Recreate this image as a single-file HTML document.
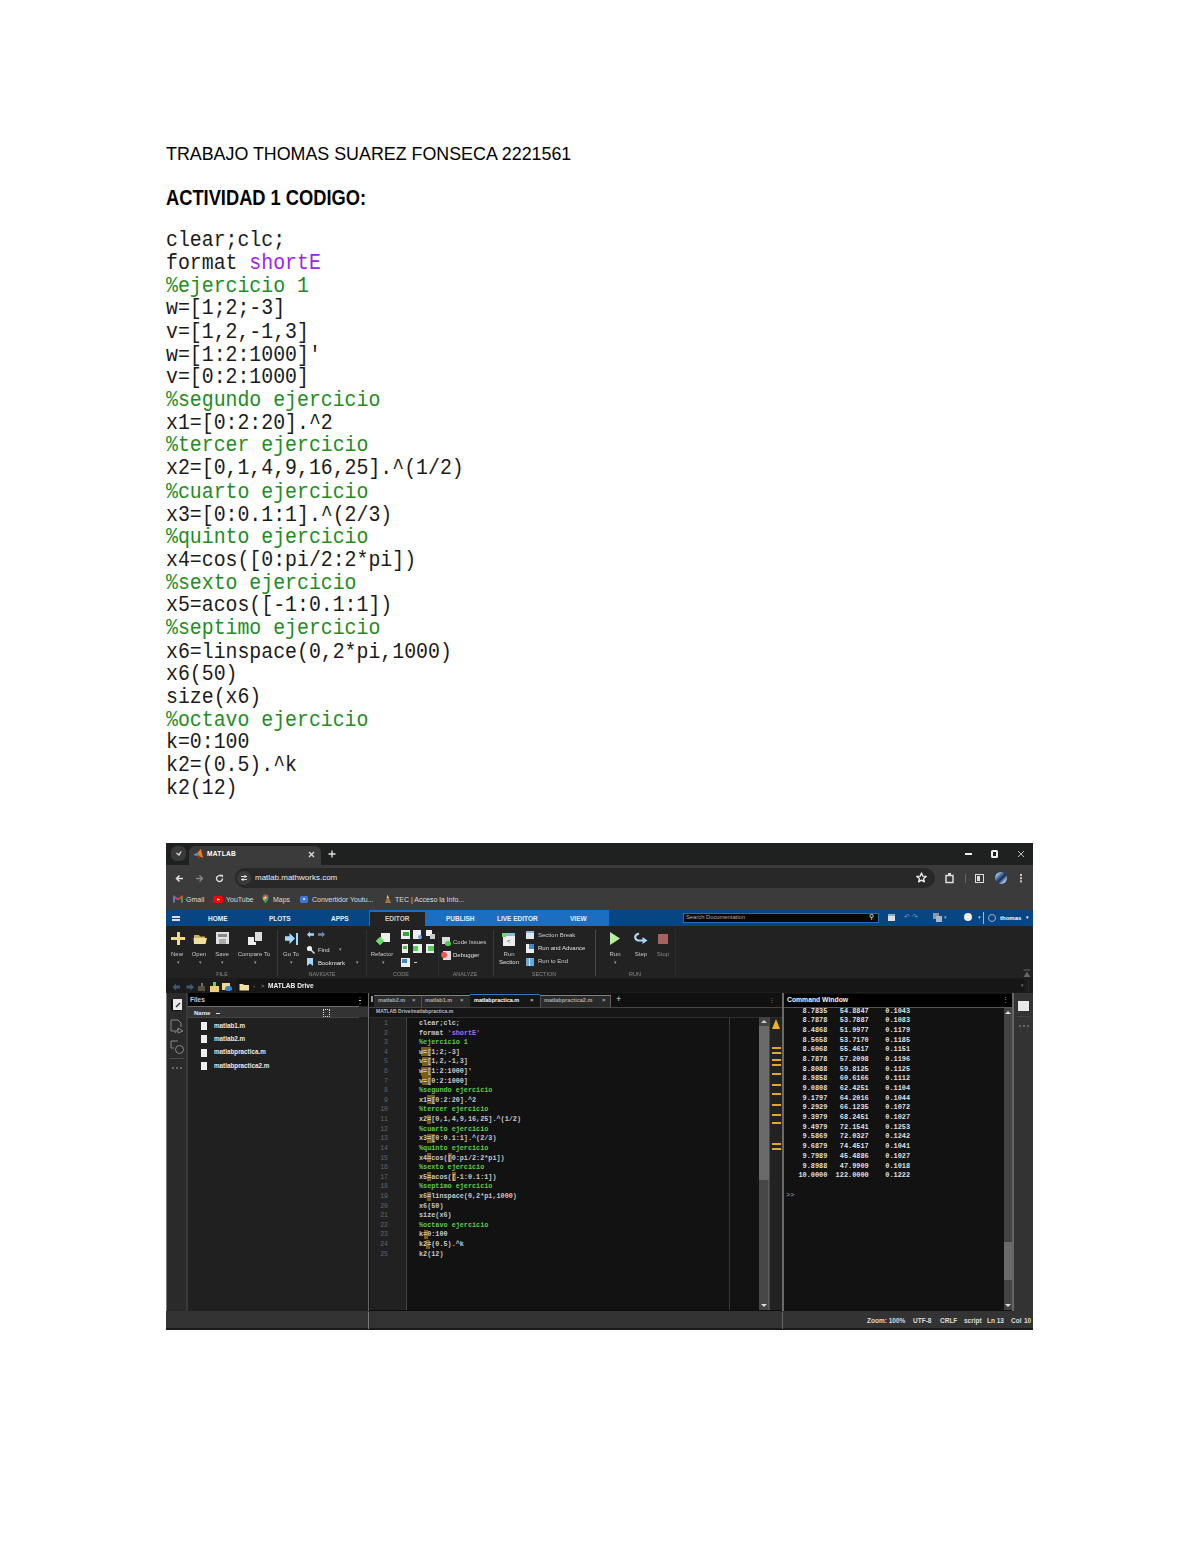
<!DOCTYPE html>
<html><head><meta charset="utf-8">
<style>
html,body{margin:0;padding:0;background:#fff;}
body{width:1200px;height:1553px;position:relative;overflow:hidden;font-family:"Liberation Sans",sans-serif;}
.t{position:absolute;white-space:pre;color:#000;}
#title{left:166px;top:143px;font-size:17.85px;transform:scaleY(1.05);transform-origin:0 0;}
#h1{left:166px;top:184.5px;font-size:18.3px;font-weight:bold;transform:scaleY(1.2);transform-origin:0 0;}
#code{position:absolute;left:166px;top:229.2px;font-family:"Liberation Mono",monospace;font-size:19.85px;line-height:21.14px;transform:scaleY(1.08);transform-origin:0 0;white-space:pre;color:#1a1a1a;}
.g{color:#228b22}.p{color:#a020f0}
.a{position:absolute;}
.s{position:absolute;white-space:pre;font-family:"Liberation Sans",sans-serif;color:#ddd;line-height:1;}
.m{position:absolute;white-space:pre;font-family:"Liberation Mono",monospace;color:#ddd;}
</style></head><body>
<div class="t" id="title">TRABAJO THOMAS SUAREZ FONSECA 2221561</div>
<div class="t" id="h1">ACTIVIDAD 1 CODIGO:</div>
<div id="code">clear;clc;
format <span class="p">shortE</span>
<span class="g">%ejercicio 1</span>
w=[1;2;-3]
v=[1,2,-1,3]
w=[1:2:1000]'
v=[0:2:1000]
<span class="g">%segundo ejercicio</span>
x1=[0:2:20].^2
<span class="g">%tercer ejercicio</span>
x2=[0,1,4,9,16,25].^(1/2)
<span class="g">%cuarto ejercicio</span>
x3=[0:0.1:1].^(2/3)
<span class="g">%quinto ejercicio</span>
x4=cos([0:pi/2:2*pi])
<span class="g">%sexto ejercicio</span>
x5=acos([-1:0.1:1])
<span class="g">%septimo ejercicio</span>
x6=linspace(0,2*pi,1000)
x6(50)
size(x6)
<span class="g">%octavo ejercicio</span>
k=0:100
k2=(0.5).^k
k2(12)</div>

<!-- ===== SCREENSHOT ===== -->
<div id="shotwrap" style="position:absolute;left:0;top:0;width:1200px;height:1553px;filter:blur(0.35px);">
<div class="a" style="left:166px;top:843px;width:867px;height:487px;background:#1f1f1f;overflow:hidden;"></div>
<!-- chrome tab strip -->
<div class="a" style="left:166px;top:843px;width:867px;height:22px;background:#1f2020;"></div>
<div class="a" style="left:171px;top:846px;width:15px;height:15px;border-radius:6px;background:#3a3a3a;"></div>
<svg class="a" style="left:171px;top:846px;" width="15" height="15"><path d="M5.5 7 L8 9 L10 5.5" stroke="#ddd" stroke-width="1.4" fill="none"/></svg>
<div class="a" style="left:189px;top:846px;width:132px;height:19px;background:#3b3b3b;border-radius:6px 6px 0 0;"></div>
<svg class="a" style="left:193px;top:849px;" width="11" height="10"><path d="M0 6 L4 4 L5 7 Z" fill="#4aa8d0"/><path d="M4 4 L8 0 L10 9 L6 7 Z" fill="#f07a20"/><path d="M5 7 L6 7 L7 9 L4.5 9 Z" fill="#b03010"/></svg>
<div class="s" style="left:207px;top:851px;font-size:6.6px;color:#fff;font-weight:bold;letter-spacing:0.3px;">MATLAB</div>
<svg class="a" style="left:308px;top:851px;" width="7" height="7"><path d="M1 1 L6 6 M6 1 L1 6" stroke="#ddd" stroke-width="1.3"/></svg>
<svg class="a" style="left:328px;top:850px;" width="8" height="8"><path d="M4 0.5 V7.5 M0.5 4 H7.5" stroke="#ddd" stroke-width="1.4"/></svg>
<div class="a" style="left:965px;top:852.5px;width:7px;height:2px;background:#eee;"></div>
<div class="a" style="left:991px;top:849.5px;width:7px;height:8px;border:2px solid #eee;border-radius:1.5px;box-sizing:border-box;"></div>
<svg class="a" style="left:1017px;top:850px;" width="8" height="8"><path d="M1 1 L7 7 M7 1 L1 7" stroke="#bbb" stroke-width="1"/></svg>
<!-- toolbar -->
<div class="a" style="left:166px;top:865px;width:867px;height:45px;background:#3b3b3b;"></div>
<svg class="a" style="left:175px;top:874px;" width="9" height="9"><path d="M8 4.5 H1.5 M4.5 1.5 L1.5 4.5 L4.5 7.5" stroke="#e0e0e0" stroke-width="1.5" fill="none"/></svg>
<svg class="a" style="left:195px;top:874px;" width="9" height="9"><path d="M1 4.5 H7.5 M4.5 1.5 L7.5 4.5 L4.5 7.5" stroke="#888" stroke-width="1.3" fill="none"/></svg>
<svg class="a" style="left:215px;top:874px;" width="9" height="9"><path d="M7.5 4.5 A3 3 0 1 1 6.5 2.3" stroke="#ddd" stroke-width="1.4" fill="none"/><path d="M5 0.8 L8 0.8 L8 3.8 Z" fill="#ddd"/></svg>
<div class="a" style="left:235px;top:868px;width:700px;height:20px;border-radius:10px;background:#282828;"></div>
<div class="a" style="left:237px;top:871px;width:14px;height:14px;border-radius:7px;background:#3b3b3b;"></div>
<svg class="a" style="left:240px;top:874px;" width="8" height="8"><path d="M1 2.5 H7 M1 5.5 H7" stroke="#ddd" stroke-width="1.2"/><circle cx="5" cy="2.5" r="1.2" fill="#ddd"/><circle cx="3" cy="5.5" r="1.2" fill="#ddd"/></svg>
<div class="s" style="left:255px;top:874px;font-size:8px;color:#eee;">matlab.mathworks.com</div>
<svg class="a" style="left:916px;top:872px;" width="11" height="11"><path d="M5.5 1 L6.8 4.2 L10.2 4.4 L7.6 6.6 L8.4 9.9 L5.5 8.1 L2.6 9.9 L3.4 6.6 L0.8 4.4 L4.2 4.2 Z" stroke="#eee" stroke-width="1.3" fill="none" stroke-linejoin="round"/></svg>
<svg class="a" style="left:944px;top:872px;" width="11" height="12"><path d="M2 3.5 H9 V10.5 H2 Z" stroke="#ddd" stroke-width="1.5" fill="none"/><path d="M4 1 H7 V3.5 H4 Z" fill="#ddd"/></svg>
<div class="a" style="left:965px;top:874px;width:1px;height:9px;background:#666;"></div>
<div class="a" style="left:975px;top:874px;width:9px;height:9px;border:1.8px solid #ddd;box-sizing:border-box;"></div><div class="a" style="left:977px;top:876px;width:2.5px;height:5px;background:#ddd;"></div>
<div class="a" style="left:995px;top:872px;width:12px;height:12px;border-radius:6px;background:linear-gradient(135deg,#dfe8f8 10%,#4a78b8 35%,#1a2a48 55%,#8ab0e0 75%,#e8eef8);"></div>
<div class="a" style="left:1020px;top:874px;width:1.8px;height:1.8px;background:#ccc;box-shadow:0 3.2px 0 #ccc,0 6.4px 0 #ccc;"></div>
<!-- bookmarks -->
<svg class="a" style="left:173px;top:895px;" width="10" height="8"><path d="M1 7.5 V1.5 L5 4.5 L9 1.5 V7.5" stroke="#ea4335" stroke-width="1.6" fill="none"/><path d="M1 7.5 V1.5" stroke="#4285f4" stroke-width="1.8"/><path d="M9 7.5 V1.5" stroke="#34a853" stroke-width="1.8"/></svg>
<div class="s" style="left:186px;top:896px;font-size:7px;color:#ddd;">Gmail</div>
<div class="a" style="left:213px;top:896px;width:10px;height:7px;border-radius:2px;background:#f00;"></div>
<svg class="a" style="left:213px;top:896px;" width="10" height="7"><path d="M4 2 L7 3.5 L4 5 Z" fill="#fff"/></svg>
<div class="s" style="left:226px;top:896px;font-size:7px;color:#ddd;">YouTube</div>
<svg class="a" style="left:262px;top:894px;" width="7" height="10"><path d="M3.5 9.5 C1 6 0.5 5 0.5 3.5 A3 3 0 0 1 6.5 3.5 C6.5 5 6 6 3.5 9.5 Z" fill="#34a853"/><path d="M0.8 2.5 A3 3 0 0 1 6.2 2.5 L3.5 4 Z" fill="#ea4335"/><path d="M0.6 3.5 L3.5 4 L2 7 Z" fill="#fbbc04"/><path d="M6.4 3.5 L3.5 4 L5 7 Z" fill="#4285f4"/><circle cx="3.5" cy="3.6" r="1" fill="#fff"/></svg>
<div class="s" style="left:273px;top:896px;font-size:7px;color:#ddd;">Maps</div>
<div class="a" style="left:300px;top:896px;width:8px;height:7px;border-radius:1.5px;background:#3a78e0;"></div>
<div class="a" style="left:303px;top:898px;width:2px;height:2px;background:#dde;"></div>
<div class="s" style="left:312px;top:896px;font-size:7px;color:#ddd;">Convertidor Youtu...</div>
<svg class="a" style="left:383px;top:894px;" width="9" height="10"><path d="M2 9 L4 4 L6 4 L8 9 Z" fill="#a07840"/><path d="M4.5 0.5 L6 4 L3.5 4 Z" fill="#e8c070"/></svg>
<div class="s" style="left:395px;top:896px;font-size:7px;color:#ddd;">TEC | Acceso la Info...</div>
<!-- matlab ribbon tabs -->
<div class="a" style="left:166px;top:910px;width:867px;height:16px;background:#084683;"></div>
<div class="a" style="left:426px;top:910px;width:183px;height:16px;background:#1b6fc2;"></div>
<div class="a" style="left:369px;top:910px;width:57px;height:17px;background:#1c6ec0;"></div>
<div class="a" style="left:370px;top:912px;width:55px;height:15px;background:#232323;"></div>
<div class="a" style="left:172px;top:916px;width:8px;height:1.5px;background:#ddd;box-shadow:0 3px 0 #ddd;"></div>
<div class="s" style="left:208px;top:915.5px;font-size:6.5px;font-weight:bold;color:#e8f0ff;">HOME</div>
<div class="s" style="left:269px;top:915.5px;font-size:6.5px;font-weight:bold;color:#e8f0ff;">PLOTS</div>
<div class="s" style="left:331px;top:915.5px;font-size:6.5px;font-weight:bold;color:#e8f0ff;">APPS</div>
<div class="s" style="left:385px;top:915.5px;font-size:6.5px;font-weight:bold;color:#ccc;">EDITOR</div>
<div class="s" style="left:446px;top:915.5px;font-size:6.5px;font-weight:bold;color:#e8f0ff;">PUBLISH</div>
<div class="s" style="left:497px;top:915.5px;font-size:6.5px;font-weight:bold;color:#e8f0ff;">LIVE EDITOR</div>
<div class="s" style="left:570px;top:915.5px;font-size:6.5px;font-weight:bold;color:#e8f0ff;">VIEW</div>
<div class="a" style="left:683px;top:913px;width:196px;height:10px;background:#080808;border:1px solid #1b6fc2;box-sizing:border-box;"></div>
<div class="s" style="left:686px;top:915px;font-size:5.8px;color:#aaa;">Search Documentation</div>
<div class="s" style="left:869px;top:913px;font-size:7px;color:#eee;">&#9906;</div>
<div class="a" style="left:888px;top:914px;width:7px;height:7px;background:#ddd;border-top:2px solid #9ab;box-sizing:border-box;"></div>
<div class="s" style="left:904px;top:913px;font-size:7px;color:#7a9ab8;">&#8630; &#8631;</div>
<div class="a" style="left:933px;top:913px;width:6px;height:6px;background:#8898a8;"></div>
<div class="a" style="left:936px;top:916px;width:6px;height:6px;background:#a8b8c8;"></div>
<div class="s" style="left:944px;top:915px;font-size:5px;color:#aab;">&#9662;</div>
<div class="a" style="left:964px;top:913px;width:8px;height:8px;border-radius:4px;background:#eee;"></div>
<div class="s" style="left:978px;top:915px;font-size:5px;color:#ccd;">&#9662;</div>
<div class="a" style="left:983px;top:912px;width:1px;height:12px;background:#9bd;"></div>
<div class="a" style="left:988px;top:914px;width:6px;height:6px;border:1px solid #aab;border-radius:4px;"></div>
<div class="s" style="left:1000px;top:915px;font-size:6px;color:#fff;font-weight:bold;">thomas</div>
<div class="s" style="left:1026px;top:915px;font-size:5px;color:#fff;">&#9662;</div>
<!-- toolstrip -->
<div class="a" style="left:166px;top:926px;width:867px;height:52px;background:#222;"></div>
<div class="a" style="left:277px;top:930px;width:1px;height:46px;background:#3a3a3a;"></div>
<div class="a" style="left:365.5px;top:930px;width:1px;height:46px;background:#333;"></div>
<div class="a" style="left:438px;top:930px;width:1px;height:46px;background:#2c2c2c;"></div>
<div class="a" style="left:493px;top:930px;width:1px;height:46px;background:#3a3a3a;"></div>
<div class="a" style="left:595px;top:930px;width:1px;height:46px;background:#4a4a4a;"></div>
<div class="a" style="left:675px;top:930px;width:1px;height:46px;background:#2a2a2a;"></div>
<svg class="a" style="left:1023px;top:969px;" width="8" height="9"><path d="M0.5 1 H7.5" stroke="#666" stroke-width="1"/><path d="M4 2.5 L7.5 8 H0.5 Z" fill="#666"/></svg>
<!-- FILE -->
<div class="a" style="left:171px;top:937px;width:14px;height:3px;background:#f5dc78;"></div>
<div class="a" style="left:176.5px;top:932px;width:3px;height:13px;background:#f5dc78;"></div>
<svg class="a" style="left:193px;top:933px;" width="15" height="12"><path d="M1 2 H6 L7 3.5 H12 V5 H1 Z" fill="#c8b060"/><path d="M0.5 5 H14 L12.5 11 H1 Z" fill="#f0e0a0"/></svg>
<div class="a" style="left:216px;top:932px;width:13px;height:12px;background:#e0e0e0;"></div>
<div class="a" style="left:218px;top:934px;width:9px;height:3px;background:#888;"></div>
<div class="a" style="left:219px;top:939px;width:7px;height:5px;background:#aaa;"></div>
<div class="a" style="left:248px;top:937px;width:8px;height:8px;background:#eee;"></div>
<div class="a" style="left:254px;top:932px;width:7px;height:9px;background:#ddd;border-left:1px solid #222;border-bottom:1px solid #222;"></div>
<div class="s" style="left:147px;top:951px;width:60px;text-align:center;font-size:6px;color:#c8c8c8;">New</div>
<div class="s" style="left:169px;top:951px;width:60px;text-align:center;font-size:6px;color:#c8c8c8;">Open</div>
<div class="s" style="left:192px;top:951px;width:60px;text-align:center;font-size:6px;color:#c8c8c8;">Save</div>
<div class="s" style="left:224px;top:951px;width:60px;text-align:center;font-size:6px;color:#c8c8c8;">Compare To</div>
<div class="s" style="left:148px;top:960px;width:60px;text-align:center;font-size:5px;color:#999;">&#9662;</div>
<div class="s" style="left:170px;top:960px;width:60px;text-align:center;font-size:5px;color:#999;">&#9662;</div>
<div class="s" style="left:192px;top:960px;width:60px;text-align:center;font-size:5px;color:#999;">&#9662;</div>
<div class="s" style="left:225px;top:960px;width:60px;text-align:center;font-size:5px;color:#999;">&#9662;</div>
<div class="s" style="left:192px;top:972px;width:60px;text-align:center;font-size:5.5px;color:#888;">FILE</div>
<!-- NAVIGATE -->
<div class="a" style="left:285px;top:933px;width:10px;height:11px;background:#a8d8f8;clip-path:polygon(0 30%,45% 30%,45% 0,100% 50%,45% 100%,45% 70%,0 70%);"></div>
<div class="a" style="left:296px;top:933px;width:2px;height:12px;background:#a8d8f8;"></div>
<div class="s" style="left:261px;top:951px;width:60px;text-align:center;font-size:6px;color:#c8c8c8;">Go To</div>
<div class="s" style="left:261px;top:960px;width:60px;text-align:center;font-size:5px;color:#999;">&#9662;</div>
<svg class="a" style="left:306px;top:931px;" width="20" height="7"><path d="M1 3.5 L4 0.5 V2.3 H8 V4.7 H4 V6.5 Z" fill="#a8d8f8"/><path d="M19 3.5 L16 0.5 V2.3 H12 V4.7 H16 V6.5 Z" fill="#6a8aa8"/></svg>
<svg class="a" style="left:306px;top:945px;" width="9" height="9"><circle cx="3.5" cy="3.5" r="2.6" fill="#eee"/><path d="M5 5 L8.5 8.5" stroke="#ddd" stroke-width="1.5"/></svg>
<div class="s" style="left:318px;top:947px;font-size:6px;color:#ddd;">Find</div>
<div class="s" style="left:339px;top:947px;font-size:5px;color:#999;">&#9662;</div>
<div class="a" style="left:307px;top:958px;width:6px;height:8px;background:#a8d8f8;clip-path:polygon(0 0,100% 0,100% 100%,50% 70%,0 100%);"></div>
<div class="s" style="left:318px;top:960px;font-size:6px;color:#e8e8e8;">Bookmark</div>
<div class="s" style="left:356px;top:960px;font-size:5px;color:#999;">&#9662;</div>
<div class="s" style="left:292px;top:972px;width:60px;text-align:center;font-size:5.5px;color:#888;">NAVIGATE</div>
<!-- CODE -->
<div class="a" style="left:381px;top:933px;width:9px;height:9px;background:#eee;"></div>
<div class="a" style="left:377px;top:938px;width:6px;height:6px;background:#6d6;transform:rotate(45deg);"></div>
<div class="s" style="left:352px;top:951px;width:60px;text-align:center;font-size:6px;color:#c8c8c8;">Refactor</div>
<div class="s" style="left:353px;top:960px;width:60px;text-align:center;font-size:5px;color:#999;">&#9662;</div>
<div class="a" style="left:401px;top:930px;width:9px;height:9px;background:#eee;"></div><div class="a" style="left:403px;top:932px;width:6px;height:4px;background:#3a3;"></div>
<div class="a" style="left:413px;top:930px;width:8px;height:9px;background:#eee;"></div><div class="a" style="left:418px;top:935px;width:4px;height:4px;border-radius:2px;background:#6ae;"></div>
<div class="a" style="left:426px;top:930px;width:6px;height:6px;background:#eee;"></div><div class="a" style="left:430px;top:934px;width:5px;height:5px;background:#ccc;"></div>
<div class="a" style="left:402px;top:944px;width:6px;height:9px;background:#eee;"></div><div class="a" style="left:403px;top:946px;width:4px;height:3px;background:#4b4;"></div>
<div class="a" style="left:413px;top:944px;width:9px;height:9px;background:#eee;"></div><div class="a" style="left:413px;top:946px;width:5px;height:5px;background:#5c5;"></div>
<div class="a" style="left:426px;top:944px;width:8px;height:9px;background:#eee;"></div><div class="a" style="left:428px;top:946px;width:6px;height:5px;background:#5c5;"></div>
<div class="a" style="left:401px;top:958px;width:9px;height:9px;background:#eee;"></div><div class="a" style="left:402px;top:959px;width:5px;height:4px;background:#48c;"></div>
<div class="a" style="left:414px;top:962px;width:3px;height:1px;background:#ccc;"></div>
<div class="s" style="left:371px;top:972px;width:60px;text-align:center;font-size:5.5px;color:#888;">CODE</div>
<!-- ANALYZE -->
<div class="a" style="left:442px;top:937px;width:8px;height:7px;background:#ddd;"></div>
<div class="a" style="left:445px;top:941px;width:6px;height:5px;background:#5c5;border-radius:3px;"></div>
<div class="s" style="left:453px;top:939px;font-size:6px;color:#ccc;">Code Issues</div>
<div class="a" style="left:443px;top:951px;width:8px;height:9px;background:#ddd;"></div>
<div class="a" style="left:441px;top:952px;width:6px;height:6px;background:#e55;border-radius:3px;"></div>
<div class="s" style="left:453px;top:952px;font-size:6px;color:#e0e0e0;">Debugger</div>
<div class="s" style="left:435px;top:972px;width:60px;text-align:center;font-size:5.5px;color:#888;">ANALYZE</div>
<!-- SECTION -->
<div class="a" style="left:503px;top:933px;width:12px;height:13px;background:#eee;border-top:3px solid #8bd;box-sizing:border-box;"></div>
<div class="a" style="left:502px;top:933px;width:4px;height:4px;background:#6d6;"></div>
<div class="s" style="left:507px;top:938px;font-size:6px;color:#333;">&lt;</div>
<div class="s" style="left:479px;top:951px;width:60px;text-align:center;font-size:6px;color:#c8c8c8;">Run</div>
<div class="s" style="left:479px;top:959px;width:60px;text-align:center;font-size:6px;color:#e0e0e0;">Section</div>
<div class="a" style="left:526px;top:931px;width:8px;height:8px;background:#dde8f0;border-top:2px solid #8bd;box-sizing:border-box;"></div>
<div class="s" style="left:538px;top:932px;font-size:6px;color:#ccc;">Section Break</div>
<div class="a" style="left:526px;top:944px;width:8px;height:9px;background:#eee;"></div><div class="a" style="left:529px;top:944px;width:5px;height:5px;background:#48c;"></div>
<div class="s" style="left:538px;top:945px;font-size:6px;color:#e0e0e0;">Run and Advance</div>
<div class="a" style="left:526px;top:958px;width:8px;height:8px;background:#6ad;"></div><div class="a" style="left:529px;top:958px;width:1px;height:8px;background:#eee;"></div>
<div class="s" style="left:538px;top:958px;font-size:6px;color:#ccc;">Run to End</div>
<div class="s" style="left:514px;top:972px;width:60px;text-align:center;font-size:5.5px;color:#888;">SECTION</div>
<!-- RUN -->
<div class="a" style="left:610px;top:932px;width:10px;height:13px;background:#b8f0a0;clip-path:polygon(0 0,100% 50%,0 100%);"></div>
<svg class="a" style="left:634px;top:932px;" width="15" height="14"><path d="M5 2 A3.2 3.2 0 0 0 4 8.5 H9" stroke="#a8d8f8" stroke-width="2.2" fill="none"/><path d="M8.5 5 L13.5 8.5 L8.5 12 Z" fill="#a8d8f8"/></svg>
<div class="a" style="left:658px;top:934px;width:10px;height:10px;background:#a86060;"></div>
<div class="s" style="left:585px;top:951px;width:60px;text-align:center;font-size:6px;color:#c8c8c8;">Run</div>
<div class="s" style="left:611px;top:951px;width:60px;text-align:center;font-size:6px;color:#c8c8c8;">Step</div>
<div class="s" style="left:633px;top:951px;width:60px;text-align:center;font-size:6px;color:#888;">Stop</div>
<div class="s" style="left:585px;top:960px;width:60px;text-align:center;font-size:5px;color:#999;">&#9662;</div>
<div class="s" style="left:605px;top:972px;width:60px;text-align:center;font-size:5.5px;color:#888;">RUN</div>
<!-- breadcrumb -->
<div class="a" style="left:166px;top:978px;width:867px;height:15px;background:#1c1c1c;"></div>
<div class="a" style="left:237px;top:979px;width:787px;height:13px;background:#161616;"></div>
<svg class="a" style="left:172px;top:983px;" width="24" height="8"><path d="M0.5 4 L4 0.5 V2.5 H8 V5.5 H4 V7.5 Z" fill="#3d5878"/><path d="M22 4 L18.5 0.5 V2.5 H14.5 V5.5 H18.5 V7.5 Z" fill="#3d5878"/></svg>
<div class="a" style="left:198px;top:986px;width:7px;height:5px;background:#5a5040;"></div>
<div class="a" style="left:201px;top:983px;width:2px;height:3px;background:#777;"></div>
<div class="a" style="left:210px;top:986px;width:9px;height:6px;background:#e8d070;"></div>
<div class="a" style="left:213px;top:982px;width:3px;height:4px;background:#6c6;"></div>
<div class="a" style="left:222px;top:983px;width:8px;height:7px;background:#f0d890;"></div>
<div class="a" style="left:225px;top:986px;width:7px;height:5px;border-radius:3px;background:#3a8ad0;"></div>
<svg class="a" style="left:239px;top:983px;" width="11" height="8"><path d="M0.5 1 H4 L5 2 H10 V7.5 H0.5 Z" fill="#f0e0a0"/></svg>
<div class="s" style="left:253px;top:983px;font-size:6px;color:#888;">&#8250;</div>
<div class="s" style="left:261px;top:983px;font-size:6px;color:#aaa;">&gt;</div>
<div class="s" style="left:268px;top:983px;font-size:6.6px;color:#f0f0f0;font-weight:bold;">MATLAB Drive</div>
<div class="s" style="left:1021px;top:983px;font-size:5px;color:#777;">&#9662;</div>
<div class="a" style="left:1028px;top:979px;width:1px;height:13px;background:#2a2a2a;"></div>
<!-- left icon sidebar -->
<div class="a" style="left:166px;top:993px;width:20px;height:319px;background:#2a2a2a;"></div>
<div class="a" style="left:166px;top:993px;width:1px;height:337px;background:#777;"></div>
<div class="a" style="left:186px;top:993px;width:2px;height:319px;background:#3a3a3a;"></div>
<div class="a" style="left:171px;top:999px;width:10px;height:12px;background:#111;border-radius:2px;"></div>
<div class="a" style="left:173px;top:999px;width:9px;height:11px;background:#eaeaea;"></div>
<svg class="a" style="left:175px;top:1002px;" width="6" height="6"><path d="M1 5 L5 1" stroke="#333" stroke-width="1.5"/></svg>
<svg class="a" style="left:170px;top:1019px;" width="15" height="15"><path d="M1 1 H8 L11 4 V8 M1 1 V12 H6" stroke="#888" stroke-width="1" fill="none"/><path d="M8 9 L13 12 L8 14 Z M5 14 L8 10" stroke="#888" stroke-width="1" fill="none"/></svg>
<svg class="a" style="left:170px;top:1040px;" width="15" height="15"><path d="M1 1 H8 M1 1 V8 H4" stroke="#888" stroke-width="1" fill="none"/><circle cx="9.5" cy="9.5" r="4" stroke="#888" stroke-width="1" fill="none"/></svg>
<div class="a" style="left:169px;top:1058px;width:15px;height:1px;background:#4a4a4a;"></div>
<div class="a" style="left:172px;top:1067px;width:2px;height:2px;background:#666;box-shadow:4px 0 0 #666,8px 0 0 #666;"></div>
<!-- files panel -->
<div class="a" style="left:188px;top:993px;width:180px;height:319px;background:#202020;"></div>
<div class="a" style="left:188px;top:993px;width:180px;height:13px;background:#000;"></div>
<div class="s" style="left:190px;top:997px;font-size:6.5px;color:#ccd;font-weight:bold;">Files</div>
<div class="a" style="left:359px;top:996.5px;width:1.5px;height:1.5px;background:#444;box-shadow:0 3px 0 #ddd,0 6px 0 #444;"></div>
<div class="a" style="left:188px;top:1006px;width:171px;height:1px;background:#6a6a6a;"></div>
<div class="a" style="left:188px;top:1007px;width:180px;height:10px;background:#333;"></div>
<div class="a" style="left:188px;top:1017px;width:171px;height:1px;background:#444;"></div>
<div class="s" style="left:194px;top:1010px;font-size:6px;color:#e8e8ff;font-weight:bold;">Name</div>
<div class="a" style="left:216px;top:1013px;width:4px;height:1.2px;background:#ddd;"></div>
<div class="a" style="left:323px;top:1009px;width:5px;height:6px;border:1px dotted #ddd;"></div>
<div class="a" style="left:201px;top:1022.0px;width:6px;height:8px;background:#eee;"></div>
<div class="s" style="left:214px;top:1022.5px;font-size:6.3px;color:#e8e8e8;font-weight:bold;">matlab1.m</div>
<div class="a" style="left:201px;top:1035.0px;width:6px;height:8px;background:#eee;"></div>
<div class="s" style="left:214px;top:1035.5px;font-size:6.3px;color:#e8e8e8;font-weight:bold;">matlab2.m</div>
<div class="a" style="left:201px;top:1048.5px;width:6px;height:8px;background:#eee;"></div>
<div class="s" style="left:214px;top:1049.0px;font-size:6.3px;color:#e8e8e8;font-weight:bold;">matlabpractica.m</div>
<div class="a" style="left:201px;top:1062.0px;width:6px;height:8px;background:#eee;"></div>
<div class="s" style="left:214px;top:1062.5px;font-size:6.3px;color:#e8e8e8;font-weight:bold;">matlabpractica2.m</div>
<div class="a" style="left:368px;top:993px;width:1.5px;height:337px;background:#6a6a6a;"></div>
<!-- editor -->
<div class="a" style="left:369px;top:993px;width:414px;height:319px;background:#121212;"></div>
<div class="a" style="left:369px;top:993px;width:414px;height:14px;background:#111;"></div>
<div class="a" style="left:371px;top:996px;width:2px;height:6px;background:#999;"></div>
<div class="a" style="left:374px;top:995px;width:47px;height:12px;background:#2a2a2a;border-top:1px solid #808080;box-sizing:border-box;"></div>
<div class="a" style="left:421px;top:995px;width:49px;height:12px;background:#2a2a2a;border-top:1px solid #808080;border-left:1px solid #505050;box-sizing:border-box;"></div>
<div class="a" style="left:470px;top:994px;width:70px;height:13px;background:#161616;border-top:1.5px solid #2a7ad0;box-sizing:border-box;"></div>
<div class="a" style="left:540px;top:995px;width:71px;height:12px;background:#2a2a2a;border-top:1px solid #808080;border-left:1px solid #505050;border-right:1px solid #606060;box-sizing:border-box;"></div>
<div class="s" style="left:378px;top:998px;font-size:5.5px;color:#aaa;font-weight:bold;">matlab2.m</div>
<div class="s" style="left:412px;top:997px;font-size:6px;color:#ccc;">&#215;</div>
<div class="s" style="left:425px;top:998px;font-size:5.5px;color:#aaa;font-weight:bold;">matlab1.m</div>
<div class="s" style="left:460px;top:997px;font-size:6px;color:#ccc;">&#215;</div>
<div class="s" style="left:474px;top:998px;font-size:5.5px;color:#fff;font-weight:bold;">matlabpractica.m</div>
<div class="s" style="left:530px;top:997px;font-size:6px;color:#eee;">&#215;</div>
<div class="s" style="left:544px;top:998px;font-size:5.5px;color:#aaa;font-weight:bold;">matlabpractica2.m</div>
<div class="s" style="left:602px;top:997px;font-size:6px;color:#ccc;">&#215;</div>
<div class="s" style="left:616px;top:995px;font-size:9px;color:#ddd;">+</div>
<div class="s" style="left:769px;top:997px;font-size:6px;color:#888;">&#8942;</div>
<div class="a" style="left:369px;top:1007px;width:414px;height:1px;background:#444;"></div>
<div class="a" style="left:369px;top:1008px;width:414px;height:9px;background:#161616;"></div>
<div class="s" style="left:376px;top:1009px;font-size:5px;color:#bbb;font-weight:bold;">MATLAB Drive/matlabpractica.m</div>
<div class="a" style="left:369px;top:1017px;width:414px;height:1px;background:#2e2e2e;"></div>
<div class="a" style="left:370px;top:1018px;width:36px;height:292px;background:#212121;"></div>
<div class="a" style="left:406px;top:1018px;width:1px;height:292px;background:#444;"></div>
<div class="a" style="left:729px;top:1018px;width:1px;height:292px;background:#3a3a3a;"></div>
<div class="a" style="left:759px;top:1017px;width:11px;height:293px;background:#474747;"></div>
<div class="a" style="left:768px;top:1017px;width:1px;height:293px;background:#5a5a5a;"></div>
<div class="a" style="left:759px;top:1017px;width:10px;height:9px;background:#444;"></div>
<div class="a" style="left:761px;top:1020px;width:0;height:0;border-left:3px solid transparent;border-right:3px solid transparent;border-bottom:3px solid #ccc;"></div>
<div class="a" style="left:759px;top:1026px;width:10px;height:154px;background:#6a6a6a;"></div>
<div class="a" style="left:761px;top:1304px;width:0;height:0;border-left:3px solid transparent;border-right:3px solid transparent;border-top:3px solid #ddd;"></div>
<div class="a" style="left:770px;top:1018px;width:12px;height:292px;background:#222;"></div>
<div class="a" style="left:772px;top:1019px;width:0;height:0;border-left:4.5px solid transparent;border-right:4.5px solid transparent;border-bottom:10px solid #f0b030;"></div>
<div class="a" style="left:772px;top:1047.3px;width:9px;height:2px;background:#e0a828;"></div>
<div class="a" style="left:772px;top:1051.6px;width:9px;height:2px;background:#e0a828;"></div>
<div class="a" style="left:772px;top:1058.6px;width:9px;height:2px;background:#e0a828;"></div>
<div class="a" style="left:772px;top:1064.1px;width:9px;height:2px;background:#e0a828;"></div>
<div class="a" style="left:772px;top:1072.8px;width:9px;height:2px;background:#e0a828;"></div>
<div class="a" style="left:772px;top:1083.9px;width:9px;height:2px;background:#e0a828;"></div>
<div class="a" style="left:772px;top:1092.9px;width:9px;height:2px;background:#e0a828;"></div>
<div class="a" style="left:772px;top:1104.0px;width:9px;height:2px;background:#e0a828;"></div>
<div class="a" style="left:772px;top:1113.8px;width:9px;height:2px;background:#e0a828;"></div>
<div class="a" style="left:772px;top:1122.2px;width:9px;height:2px;background:#e0a828;"></div>
<div class="a" style="left:772px;top:1142.7px;width:9px;height:2px;background:#e0a828;"></div>
<div class="a" style="left:772px;top:1147.5px;width:9px;height:2px;background:#e0a828;"></div>
<div class="a" style="left:369px;top:1310px;width:414px;height:1px;background:#0d0d0d;"></div>
<div class="a" style="left:421px;top:1047.3px;width:10px;height:9px;background:#7d5c12;"></div>
<div class="a" style="left:422px;top:1056.9px;width:9px;height:9px;background:#7d5c12;"></div>
<div class="a" style="left:421px;top:1066.5px;width:10px;height:9px;background:#7d5c12;"></div>
<div class="a" style="left:422px;top:1076.2px;width:9px;height:9px;background:#7d5c12;"></div>
<div class="a" style="left:427px;top:1095.4px;width:8px;height:9px;background:#7d5c12;"></div>
<div class="a" style="left:427px;top:1114.6px;width:4px;height:9px;background:#7d5c12;"></div>
<div class="a" style="left:427px;top:1133.8px;width:8px;height:9px;background:#7d5c12;"></div>
<div class="a" style="left:427px;top:1153.0px;width:4px;height:9px;background:#7d5c12;"></div>
<div class="a" style="left:448px;top:1153.0px;width:4px;height:9px;background:#7d5c12;"></div>
<div class="a" style="left:427px;top:1172.3px;width:4px;height:9px;background:#7d5c12;"></div>
<div class="a" style="left:452px;top:1172.3px;width:4px;height:9px;background:#7d5c12;"></div>
<div class="a" style="left:427px;top:1191.5px;width:4px;height:9px;background:#7d5c12;"></div>
<div class="a" style="left:424px;top:1229.9px;width:4px;height:9px;background:#7d5c12;"></div>
<div class="a" style="left:426px;top:1239.5px;width:4px;height:9px;background:#7d5c12;"></div>
<!-- line numbers -->
<div class="m" id="ln" style="left:370px;top:1019px;width:18px;text-align:right;font-size:6.5px;line-height:9.61px;color:#666;">1
2
3
4
5
6
7
8
9
10
11
12
13
14
15
16
17
18
19
20
21
22
23
24
25</div>
<div class="m" id="ec" style="left:419px;top:1019px;font-size:6.8px;font-weight:bold;line-height:9.61px;color:#c8c8c8;">clear;clc;
format <span style="color:#b468e8">'shortE'</span>
<span style="color:#62c848">%ejercicio 1</span>
w=[1;2;-3]
v=[1,2,-1,3]
w=[1:2:1000]'
v=[0:2:1000]
<span style="color:#62c848">%segundo ejercicio</span>
x1=[0:2:20].^2
<span style="color:#62c848">%tercer ejercicio</span>
x2=[0,1,4,9,16,25].^(1/2)
<span style="color:#62c848">%cuarto ejercicio</span>
x3=[0:0.1:1].^(2/3)
<span style="color:#62c848">%quinto ejercicio</span>
x4=cos([0:pi/2:2*pi])
<span style="color:#62c848">%sexto ejercicio</span>
x5=acos([-1:0.1:1])
<span style="color:#62c848">%septimo ejercicio</span>
x6=linspace(0,2*pi,1000)
x6(50)
size(x6)
<span style="color:#62c848">%octavo ejercicio</span>
k=0:100
k2=(0.5).^k
k2(12)</div>
<div class="a" style="left:782px;top:993px;width:2px;height:337px;background:#6a6a6a;"></div>
<!-- command window -->
<div class="a" style="left:784px;top:993px;width:229px;height:319px;background:#121212;"></div>
<div class="a" style="left:784px;top:994px;width:228px;height:13px;background:#000;"></div>
<div class="s" style="left:787px;top:997px;font-size:6.8px;color:#f4f4f4;font-weight:bold;">Command Window</div>
<div class="s" style="left:1002px;top:996px;font-size:7px;color:#aaa;">&#8942;</div>
<div class="a" style="left:784px;top:1007px;width:228px;height:1px;background:#555;"></div>
<div class="m" id="cw" style="left:786px;top:1006.5px;font-size:6.9px;line-height:9.69px;color:#e0e0e0;font-weight:bold;">    8.7835   54.8847    0.1043
    8.7878   53.7887    0.1083
    8.4868   51.9977    0.1179
    8.5658   53.7170    0.1185
    8.6068   55.4617    0.1151
    8.7878   57.2098    0.1196
    8.8088   59.8125    0.1125
    8.9858   60.6166    0.1112
    9.0808   62.4251    0.1104
    9.1797   64.2016    0.1044
    9.2929   66.1235    0.1072
    9.3979   68.2451    0.1027
    9.4979   72.1541    0.1253
    9.5869   72.0327    0.1242
    9.6879   74.4517    0.1041
    9.7989   45.4886    0.1027
    9.8988   47.9909    0.1018
   10.0000  122.0000    0.1222

<span style="font-weight:normal;color:#aaa;">&gt;&gt;</span></div>
<div class="a" style="left:1004px;top:1008px;width:8px;height:302px;background:#434343;"></div>
<div class="a" style="left:1004px;top:1242px;width:8px;height:38px;background:#6a6a6a;"></div>
<div class="a" style="left:1012px;top:993px;width:2px;height:319px;background:#666;"></div>
<div class="a" style="left:1014px;top:993px;width:19px;height:319px;background:#333;"></div>
<div class="a" style="left:1018px;top:1001px;width:11px;height:10px;background:#e8e8e8;"></div>
<div class="a" style="left:1017px;top:1016px;width:13px;height:1px;background:#444;"></div>
<div class="a" style="left:1019px;top:1024.5px;width:2px;height:2px;background:#666;box-shadow:4px 0 0 #666,8px 0 0 #666;"></div>
<!-- status bar -->
<div class="a" style="left:166px;top:1311px;width:867px;height:17px;background:#333;"></div>
<div class="a" style="left:166px;top:1328px;width:867px;height:2px;background:#1a1a1a;"></div>
<div class="a" style="left:368px;top:1312px;width:1px;height:17px;background:#777;"></div>
<div class="a" style="left:782px;top:1312px;width:1px;height:17px;background:#666;"></div>
<div class="s" style="left:867px;top:1317.5px;font-size:6.5px;color:#ddd;font-weight:bold;">Zoom: 100%</div>
<div class="s" style="left:913px;top:1317.5px;font-size:6.5px;color:#ddd;font-weight:bold;">UTF-8</div>
<div class="s" style="left:940px;top:1317.5px;font-size:6.5px;color:#ddd;font-weight:bold;">CRLF</div>
<div class="s" style="left:964px;top:1317.5px;font-size:6.5px;color:#ddd;font-weight:bold;">script</div>
<div class="s" style="left:987px;top:1317.5px;font-size:6.5px;color:#ddd;font-weight:bold;">Ln 13</div>
<div class="s" style="left:1011px;top:1317.5px;font-size:6.5px;color:#ddd;font-weight:bold;">Col</div>
<div class="s" style="left:1024px;top:1317.5px;font-size:6.5px;color:#ddd;font-weight:bold;">10</div>
<div class="a" style="left:1005px;top:1304px;width:0;height:0;border-left:3px solid transparent;border-right:3px solid transparent;border-top:3.5px solid #ddd;"></div>
<div class="a" style="left:1005px;top:1011px;width:0;height:0;border-left:3px solid transparent;border-right:3px solid transparent;border-bottom:3px solid #ddd;"></div>
</div>
</body></html>
